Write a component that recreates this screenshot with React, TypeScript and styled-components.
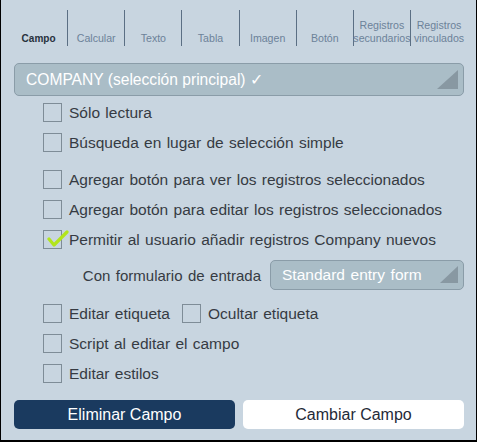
import React from "react";
import styled, { createGlobalStyle } from "styled-components";

const Global = createGlobalStyle`
  html, body { margin: 0; padding: 0; background: #c8d5e0; }
  body { font-family: "Liberation Sans", Arial, sans-serif; }
  * { box-sizing: border-box; }
`;

const Panel = styled.div`
  width: 477px;
  height: 442px;
  background: #c8d5e0;
  border-left: 1px solid #000;
  border-right: 1px solid #000;
  border-bottom: 2px solid #000;
  padding: 0 12px 0 13px;
  display: flex;
  flex-direction: column;
  font-family: "Liberation Sans", Arial, sans-serif;
`;

const TabBar = styled.div`
  display: flex;
  margin-left: -4px;
  padding-top: 10px;
  height: 46px;
`;

const Tab = styled.div<{ $active?: boolean; $first?: boolean }>`
  width: 57.15px;
  height: 36px;
  flex: none;
  border-left: ${(p) => (p.$first ? "none" : "1px solid #5b6f84")};
  display: flex;
  flex-direction: column;
  justify-content: flex-end;
  align-items: center;
  text-align: center;
  padding-bottom: 1px;
  font-size: ${(p) => (p.$active ? "10px" : "10.6px")};
  line-height: 13px;
  white-space: nowrap;
  color: ${(p) => (p.$active ? "#27313d" : "#6c8299")};
  font-weight: ${(p) => (p.$active ? "bold" : "normal")};
`;

const Select = styled.div<{ $height: number }>`
  position: relative;
  height: ${(p) => p.$height}px;
  background: #aabdc7;
  border: 1px solid #8a9ca8;
  border-radius: 5px;
  color: #fff;
  display: flex;
  align-items: center;
  white-space: nowrap;
`;

const MainSelect = styled(Select)`
  margin-top: 17px;
  padding-left: 11px;
  font-size: 15.6px;
`;

const FormSelect = styled(Select)`
  width: 194px;
  padding-left: 11px;
  font-size: 15.5px;
`;

const Arrow = styled.svg`
  position: absolute;
  right: 5px;
  bottom: 6px;
`;

const Options = styled.div`
  display: flex;
  flex-direction: column;
  padding-left: 29px;
  margin-top: 7px;
`;

const Row = styled.div<{ $gap: number }>`
  display: flex;
  align-items: center;
  height: 19px;
  margin-top: ${(p) => p.$gap}px;
`;

const Option = styled.label`
  display: flex;
  align-items: center;
  gap: 7px;
  font-size: 15.5px;
  word-spacing: 1px;
  color: #363b43;
  white-space: nowrap;
  margin-right: 12px;
`;

const Box = styled.span`
  position: relative;
  width: 19px;
  height: 19px;
  flex: none;
  border: 1px solid #7e8c97;
`;

const Check = styled.svg`
  position: absolute;
  left: 2px;
  top: -1px;
`;

const FormRow = styled.div`
  display: flex;
  align-items: center;
  justify-content: flex-end;
  gap: 9px;
  margin-top: 11px;
  height: 30px;
  font-size: 15px;
  word-spacing: 1.3px;
  color: #363b43;
`;

const Buttons = styled.div`
  display: flex;
  gap: 8px;
  margin-top: 17px;
`;

const Button = styled.button<{ $primary?: boolean }>`
  flex: 1;
  height: 29px;
  border: none;
  border-radius: 5px;
  font-family: "Liberation Sans", Arial, sans-serif;
  font-size: 16px;
  padding: 0;
  background: ${(p) => (p.$primary ? "#1a3a5f" : "#ffffff")};
  color: ${(p) => (p.$primary ? "#ffffff" : "#1f2a38")};
`;

const Triangle = ({ w, h }: { w: number; h: number }) => (
  <Arrow width={w} height={h} viewBox={`0 0 ${w} ${h}`}>
    <polygon points={`${w},0 ${w},${h} 0,${h}`} fill="#8898a2" />
  </Arrow>
);

const CheckBox = ({ checked }: { checked?: boolean }) => (
  <Box>
    {checked && (
      <Check width="24" height="19" viewBox="0 0 24 19">
        <polyline
          points="3,9 8,15 21,2"
          fill="none"
          stroke="#b2e51c"
          strokeWidth="3.2"
          strokeLinecap="round"
          strokeLinejoin="round"
        />
      </Check>
    )}
  </Box>
);

const tabs: { label: React.ReactNode; active?: boolean }[] = [
  { label: "Campo", active: true },
  { label: "Calcular" },
  { label: "Texto" },
  { label: "Tabla" },
  { label: "Imagen" },
  { label: "Botón" },
  { label: (<>Registros<br />secundarios</>) },
  { label: (<>Registros<br />vinculados</>) },
];

export default function App() {
  return (
    <>
      <Global />
      <Panel>
        <TabBar>
          {tabs.map((t, i) => (
            <Tab key={i} $active={t.active} $first={i === 0}>
              <span>{t.label}</span>
            </Tab>
          ))}
        </TabBar>

        <MainSelect $height={33}>
          COMPANY (selección principal) ✓
          <Triangle w={21} h={19} />
        </MainSelect>

        <Options>
          <Row $gap={0}>
            <Option><CheckBox />Sólo lectura</Option>
          </Row>
          <Row $gap={11}>
            <Option><CheckBox />Búsqueda en lugar de selección simple</Option>
          </Row>
          <Row $gap={18}>
            <Option><CheckBox />Agregar botón para ver los registros seleccionados</Option>
          </Row>
          <Row $gap={11}>
            <Option><CheckBox />Agregar botón para editar los registros seleccionados</Option>
          </Row>
          <Row $gap={11}>
            <Option><CheckBox checked />Permitir al usuario añadir registros Company nuevos</Option>
          </Row>
        </Options>

        <FormRow>
          Con formulario de entrada
          <FormSelect $height={30}>
            Standard entry form
            <Triangle w={18} h={17} />
          </FormSelect>
        </FormRow>

        <Options>
          <Row $gap={7}>
            <Option><CheckBox />Editar etiqueta</Option>
            <Option><CheckBox />Ocultar etiqueta</Option>
          </Row>
          <Row $gap={11}>
            <Option><CheckBox />Script al editar el campo</Option>
          </Row>
          <Row $gap={11}>
            <Option><CheckBox />Editar estilos</Option>
          </Row>
        </Options>

        <Buttons>
          <Button $primary>Eliminar Campo</Button>
          <Button>Cambiar Campo</Button>
        </Buttons>
      </Panel>
    </>
  );
}
